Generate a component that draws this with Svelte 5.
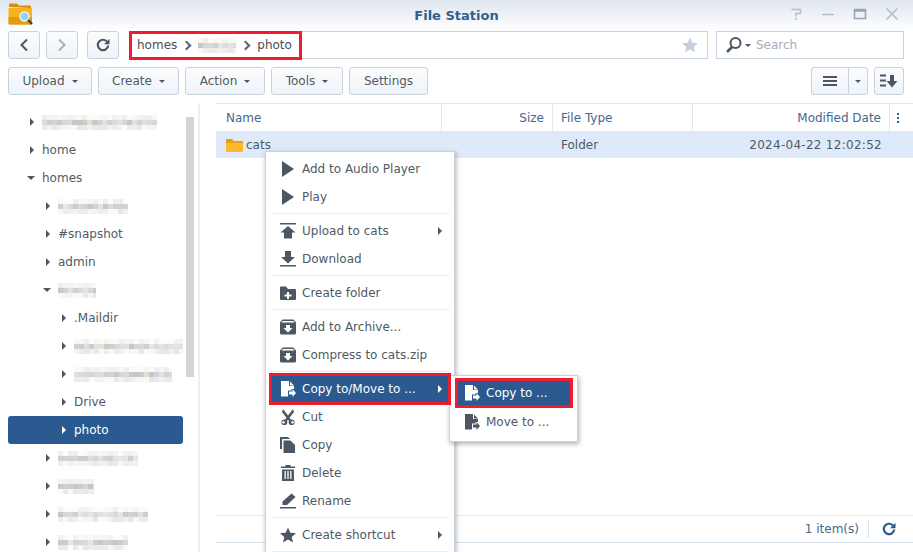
<script>
	const tree = [
		{ level: 0, blur: 115 },
		{ level: 0, label: 'home' },
		{ level: 0, label: 'homes', open: true },
		{ level: 1, blur: 70 },
		{ level: 1, label: '#snapshot' },
		{ level: 1, label: 'admin' },
		{ level: 1, blur: 38, open: true },
		{ level: 2, label: '.Maildir' },
		{ level: 2, blur: 113 },
		{ level: 2, blur: 98 },
		{ level: 2, label: 'Drive' },
		{ level: 2, label: 'photo', selected: true },
		{ level: 1, blur: 80 },
		{ level: 1, blur: 36 },
		{ level: 1, blur: 90 },
		{ level: 1, blur: 70 }
	];

	const actions = [
		{ label: 'Upload', width: 84, caret: true },
		{ label: 'Create', width: 81, caret: true },
		{ label: 'Action', width: 80, caret: true },
		{ label: 'Tools', width: 72, caret: true },
		{ label: 'Settings', width: 79 }
	];

	const menu = [
		[
			{ label: 'Add to Audio Player', icon: 'play' },
			{ label: 'Play', icon: 'play' }
		],
		[
			{ label: 'Upload to cats', icon: 'upload', sub: true },
			{ label: 'Download', icon: 'download' }
		],
		[{ label: 'Create folder', icon: 'newfolder' }],
		[
			{ label: 'Add to Archive...', icon: 'archive' },
			{ label: 'Compress to cats.zip', icon: 'archive' }
		],
		[
			{ label: 'Copy to/Move to ...', icon: 'copyto', sub: true, active: true },
			{ label: 'Cut', icon: 'cut' },
			{ label: 'Copy', icon: 'copy' },
			{ label: 'Delete', icon: 'trash' },
			{ label: 'Rename', icon: 'rename' }
		],
		[{ label: 'Create shortcut', icon: 'star', sub: true }],
		[]
	];

	// pixelated censor block, seeded so it stays the same between runs
	function mosaic(width, seed = 1) {
		const cell = 5;
		let r = seed * 97 + width;
		const rows = [
			[238, 16],
			[198, 34],
			[230, 22]
		].map(([base, span]) => {
			const stops = [];
			for (let x = 0; x < width; x += cell) {
				r = (r * 71 + 13) % 101;
				const g = base + (r % span);
				const tint = r % 3 === 0 ? 4 : r % 3 === 1 ? -3 : 0;
				stops.push(`rgb(${g + tint},${g},${g - tint}) ${x}px ${x + cell}px`);
			}
			return `linear-gradient(90deg,${stops.join(',')})`;
		});
		return `width:${width}px;background-image:${rows.join(',')}`;
	}
</script>

{#snippet icon(name)}
	<svg class="ico" viewBox="0 0 16 16" width="16" height="16" aria-hidden="true">
		{#if name === 'play'}
			<path d="M2 0L14 8 2 16Z" />
		{:else if name === 'upload'}
			<path d="M0 0h16v1.500H0z M8 3 L15.500 9.500 H12 V15.500 H4 V9.500 H0.500 Z" />
		{:else if name === 'download'}
			<path d="M5 0h6v6h4L8 12.500 1 6h4z M0 14h16v1.500H0z" />
		{:else if name === 'newfolder'}
			<path fill-rule="evenodd" d="M0 2.500A1 1 0 0 1 1 1.500h5l2 2.500h7a1 1 0 0 1 1 1v9a1 1 0 0 1-1 1H1a1 1 0 0 1-1-1z M7 7v2.500H4.500v2H7V14h2v-2.500h2.500v-2H9V7z" />
		{:else if name === 'archive'}
			<path fill-rule="evenodd" d="M2.500 0.500h11L16 3.500V14a1.500 1.500 0 0 1-1.500 1.500h-13A1.500 1.500 0 0 1 0 14V3.500z M2.500 2L1.500 3.500h13L13.500 2z M6 6v3H3.500L8 13.500 12.500 9H10V6z" />
		{:else if name === 'copyto'}
			<path d="M1 0H9V5H14V8H11.500V9.500H8V15.500H1z M10 0.500L14 4.500H10z" />
			<path d="M9 10.500h3.500V8l3.500 4-3.500 4v-2.500H9z" />
		{:else if name === 'cut'}
			<path fill-rule="evenodd" d="M3 0 L8 6.500 L13 0 L14 3 L9.500 8.800 L11 10.500 A3 3 0 1 1 9 12 L8 10.700 L7 12 A3 3 0 1 1 5 10.500 L6.500 8.800 L2 3 Z M3.500 12 a1.300 1.300 0 1 0 .01 0z M12.500 12 a1.300 1.300 0 1 0 .01 0z" />
		{:else if name === 'copy'}
			<path d="M0 0h8l2 2H3a1 1 0 0 0-1 1v9H0z M3.500 3.500h7l4.500 4.500v8H3.500z" />
		{:else if name === 'trash'}
			<path fill-rule="evenodd" d="M5.500 0h5v1.500H15V3H1V1.500h4.500z M2 4.500h12V16H2z M4.500 6v8h1.300V6z M7.350 6v8h1.300V6z M10.200 6v8h1.300V6z" />
		{:else if name === 'rename'}
			<path d="M11.500 0.500 L15.500 4 L7 12 H2.500 V8.500z M0 14h16v1.500H0z" />
		{:else if name === 'star'}
			<path d="M8 0.500 L10.300 5.700 L16 6.300 L11.700 10 L13 15.500 L8 12.600 L3 15.500 L4.300 10 L0 6.300 L5.700 5.700 Z" />
		{/if}
	</svg>
{/snippet}

<div class="app">
	<header class="title">
		<svg class="logo" viewBox="0 0 25 22" width="25" height="22" aria-hidden="true">
			<path d="M1 4V1.500Q1 .5 2 .5h7l2 2h11q1 0 1 1V5z" fill="#d98d0d" />
			<path d="M.5 5h23.500v15q0 1.500-1.500 1.500H2Q.5 21.500.5 20z" fill="#f5b324" />
			<path d="M.5 14h23.500v6q0 1.500-1.500 1.500H2Q.5 21.500.5 20z" fill="#e39a12" />
			<circle cx="16.500" cy="13.500" r="4.500" fill="#8fd6f2" stroke="#e8f4fa" stroke-width="1.500" />
			<path d="M20 17l4 4" stroke="#26415c" stroke-width="2.200" />
		</svg>
		<span class="title-text">File Station</span>
		<div class="win">
			<svg viewBox="0 0 14 14" width="14" height="14"><path d="M2.500 2.500h9v4h-4.500v3 M7 11v2" fill="none" stroke="#b4bcc4" stroke-width="1.500" /></svg>
			<svg viewBox="0 0 14 14" width="14" height="14"><path d="M1 7.500h12" stroke="#b4bcc4" stroke-width="1.500" /></svg>
			<svg viewBox="0 0 14 14" width="14" height="14"><path d="M1.500 2.500h11v9h-11z" fill="none" stroke="#9aa3ac" stroke-width="1.500" /><path d="M1.500 3.500h11" stroke="#9aa3ac" stroke-width="2.500" /></svg>
			<svg viewBox="0 0 14 14" width="14" height="14"><path d="M1.500 1.500l11 11M12.500 1.500l-11 11" stroke="#b4bcc4" stroke-width="1.500" /></svg>
		</div>
	</header>

	<div class="nav">
		<button class="btn square" aria-label="Back"><svg viewBox="0 0 12 14" width="12" height="14"><path d="M9 1.500L3.500 7 9 12.500" fill="none" stroke="#4d5763" stroke-width="2" /></svg></button>
		<button class="btn square" aria-label="Forward"><svg viewBox="0 0 12 14" width="12" height="14"><path d="M3 1.500L8.500 7 3 12.500" fill="none" stroke="#a9b2bb" stroke-width="2" /></svg></button>
		<button class="btn square refresh" aria-label="Refresh">
			<svg viewBox="0 0 14 14" width="14" height="14"><path d="M11.500 4.300A5.200 5.200 0 1 0 12.200 7.500" fill="none" stroke="#4d5763" stroke-width="2.200" /><path d="M13.500 .8v5.500H8z" fill="#4d5763" /></svg>
		</button>
		<div class="path">
			<div class="crumbs">
				<span>homes</span><i class="chev"></i><span class="blur" style={mosaic(38, 3)}></span><i class="chev"></i><span>photo</span>
			</div>
			<svg class="fav" viewBox="0 0 16 16" width="16" height="16"><path d="M8 .5L10.300 5.700 16 6.300 11.700 10 13 15.500 8 12.600 3 15.500 4.300 10 0 6.300 5.700 5.700z" fill="#c6d0da" /></svg>
		</div>
		<div class="search">
			<svg viewBox="0 0 18 18" width="18" height="18"><circle cx="10.500" cy="7" r="5" fill="none" stroke="#4d5763" stroke-width="2" /><path d="M7 11l-5 5" stroke="#4d5763" stroke-width="2.600" /></svg>
			<i class="caret"></i>
			<span>Search</span>
		</div>
	</div>

	<div class="actions">
		{#each actions as a}
			<button class="btn action" style="width:{a.width}px">{a.label}{#if a.caret}<i class="caret"></i>{/if}</button>
		{/each}
		<div class="view">
			<div class="split">
				<button class="btn list" aria-label="List view"><svg viewBox="0 0 16 12" width="16" height="12"><path d="M1 2h14M1 6h14M1 10h14" stroke="#4d5763" stroke-width="1.800" /></svg></button>
				<button class="btn drop" aria-label="View options"><i class="caret"></i></button>
			</div>
			<button class="btn sort" aria-label="Sort"><svg viewBox="0 0 18 14" width="18" height="14"><path d="M0 1.500h6M0 6.500h6M0 11.500h6" stroke="#4d5763" stroke-width="1.800" /><path d="M10 1h4v6h3.500L12 13.500 6.500 7H10z" fill="#4d5763" /></svg></button>
		</div>
	</div>

	<div class="body">
		<aside class="side">
			<div class="tree">
				{#each tree as n, i}
					<div class="node l{n.level}" class:selected={n.selected}>
						<i class={n.open ? 'arrow-down' : 'arrow-right'}></i>
						{#if n.blur}
							<span class="blur" style={mosaic(n.blur, i + 1)}></span>
						{:else}
							<span>{n.label}</span>
						{/if}
					</div>
				{/each}
			</div>
			<div class="scroll"></div>
		</aside>

		<main class="files">
			<div class="thead">
				<div class="th name">Name</div>
				<div class="th size">Size</div>
				<div class="th type">File Type</div>
				<div class="th date">Modified Date</div>
				<div class="th more"><i></i><i></i><i></i></div>
			</div>
			<div class="row">
				<div class="name">
					<svg viewBox="0 0 17 14" width="17" height="14"><path d="M0 2q0-1 1-1h5l2 2h8q1 0 1 1v1H0z" fill="#e79f16" /><path d="M0 5h17v8q0 1-1 1H1q-1 0-1-1z" fill="#fdb827" /></svg>
					cats
				</div>
				<div class="size"></div>
				<div class="type">Folder</div>
				<div class="date stamp">2024-04-22 12:02:52</div>
			</div>
			<div class="spacer"></div>
			<footer class="foot">
				<span>1 item(s)</span>
				<button class="reload" aria-label="Reload">
					<svg viewBox="0 0 14 14" width="14" height="14"><path d="M11.500 4.300A5.200 5.200 0 1 0 12.200 7.500" fill="none" stroke="#2b5a8e" stroke-width="2.200" /><path d="M13.500 .8v5.500H8z" fill="#2b5a8e" /></svg>
				</button>
			</footer>
		</main>
	</div>

	<div class="menu">
		{#each menu as group, g}
			{#if g > 0}<div class="sep"></div>{/if}
			{#each group as item}
				<div class="item" class:active={item.active}>
					{@render icon(item.icon)}
					<span>{item.label}</span>
					{#if item.sub}<i class="arrow-right sub"></i>{/if}
				</div>
			{/each}
		{/each}
	</div>

	<div class="submenu">
		<div class="item active">{@render icon('copyto')}<span>Copy to ...</span></div>
		<div class="item">{@render icon('copyto')}<span>Move to ...</span></div>
	</div>

	<div class="mark-path"></div>
</div>

<style>
	:global(body) {
		margin: 0;
		background: #fff;
	}

	.app {
		position: relative;
		display: flex;
		flex-direction: column;
		width: 913px;
		height: 552px;
		overflow: hidden;
		background: #fff;
		font: 12px/16px 'DejaVu Sans', Verdana, sans-serif;
		color: #505a64;
	}

	i {
		display: block;
		font-style: normal;
	}

	.title {
		display: flex;
		align-items: center;
		justify-content: center;
		position: relative;
		flex: none;
		height: 31px;
		background: linear-gradient(#dfe6ee, #fff);
	}

	.logo {
		position: absolute;
		left: 8px;
		top: 3px;
	}

	.title-text {
		font-weight: 700;
		font-size: 13px;
		color: #2f5f92;
	}

	.win {
		position: absolute;
		right: 14px;
		top: 7px;
		display: flex;
		gap: 18px;
	}

	.btn {
		display: flex;
		align-items: center;
		justify-content: center;
		height: 28px;
		padding: 0;
		border: 1px solid #c6d3df;
		border-radius: 3px;
		background: linear-gradient(#fbfcfd, #eff4f9);
		font: inherit;
		color: inherit;
	}

	.nav {
		display: flex;
		flex: none;
		height: 28px;
		padding: 0 9px 0 8px;
		gap: 6px;
	}

	.square {
		width: 32px;
	}

	.refresh {
		margin-left: 3px;
	}

	.path {
		display: flex;
		align-items: center;
		justify-content: space-between;
		width: 579px;
		margin-left: 4px;
		box-sizing: border-box;
		border: 1px solid #c6d3df;
		padding: 0 9px 0 7px;
	}

	.crumbs {
		display: flex;
		align-items: center;
		gap: 8px;
		color: #4a4f55;
	}

	.chev {
		width: 5px;
		height: 5px;
		margin-left: -2px;
		border: solid #5c6670;
		border-width: 2px 2px 0 0;
		transform: rotate(45deg);
	}

	.search {
		display: flex;
		align-items: center;
		flex: 1;
		margin-left: 2px;
		padding-left: 8px;
		border: 1px solid #c6d3df;
		color: #a6aeb6;
	}

	.search .caret {
		margin: 0 5px 0 2px;
	}

	.caret {
		width: 0;
		height: 0;
		border: 3.500px solid transparent;
		border-top: 3.500px solid #4d5763;
		border-bottom: 0;
	}

	.actions {
		display: flex;
		flex: none;
		height: 28px;
		margin-top: 8px;
		padding: 0 9px 0 8px;
		gap: 6px;
	}

	.action {
		gap: 7px;
	}

	.view {
		display: flex;
		gap: 6px;
		margin-left: auto;
	}

	.split {
		display: flex;
	}

	.list {
		width: 37px;
		border-radius: 3px 0 0 3px;
		border-right: 0;
	}

	.drop {
		width: 20px;
		border-radius: 0 3px 3px 0;
	}

	.sort {
		width: 30px;
	}

	.body {
		display: flex;
		flex: 1;
		min-height: 0;
		margin-top: 8px;
	}

	.side {
		position: relative;
		width: 200px;
		flex: none;
		box-sizing: border-box;
		padding: 5px 0 0 8px;
		border-right: 2px solid #eef0f2;
	}

	.node {
		display: flex;
		align-items: center;
		width: 175px;
		height: 28px;
		box-sizing: border-box;
		border-radius: 3px;
		gap: 8px;
		white-space: nowrap;
	}

	.l0 {
		padding-left: 22px;
	}

	.l1 {
		padding-left: 38px;
	}

	.l2 {
		padding-left: 54px;
	}

	.arrow-right {
		width: 0;
		height: 0;
		border-left: 4px solid #4d5763;
		border-top: 4.500px solid transparent;
		border-bottom: 4.500px solid transparent;
	}

	.arrow-down {
		width: 0;
		height: 0;
		margin-left: -3px;
		margin-right: -1px;
		border-top: 4px solid #4d5763;
		border-left: 4.500px solid transparent;
		border-right: 4.500px solid transparent;
	}

	.selected {
		background: #2a5a8f;
		color: #fff;
	}

	.selected .arrow-right {
		border-left-color: #fff;
	}

	.blur {
		display: block;
		height: 15px;
		background-size: 100% 5px;
		background-repeat: no-repeat;
		background-position:
			0 0,
			0 5px,
			0 10px;
	}

	.scroll {
		position: absolute;
		left: 186px;
		top: 14px;
		width: 8px;
		height: 260px;
		background: #d3d5d7;
	}

	.files {
		flex: 1;
		display: flex;
		flex-direction: column;
		min-width: 0;
		margin-left: 16px;
		border-top: 1px solid #e0e6ec;
		color: #505a64;
	}

	.thead,
	.row {
		display: grid;
		grid-template-columns: 226px 111px 140px 197px 23px;
		flex: none;
	}

	.thead {
		height: 27px;
		color: #44688f;
	}

	.th {
		display: flex;
		align-items: center;
		padding: 0 8px;
		border-right: 1px solid #dfe7ef;
	}

	.th.name {
		padding-left: 10px;
	}

	.size,
	.date {
		display: flex;
		align-items: center;
		justify-content: flex-end;
		padding: 0 8px;
	}

	.stamp {
		letter-spacing: 0.28px;
	}

	.more {
		flex-direction: column;
		justify-content: center;
		gap: 2px;
		padding: 0 0 0 7px;
		border: 0;
		align-items: flex-start;
	}

	.more i {
		width: 2px;
		height: 2px;
		background: #2a5a8f;
	}

	.row {
		height: 27px;
		background: #deeafa;
		align-items: center;
	}

	.row .name {
		display: flex;
		align-items: center;
		gap: 3px;
		padding-left: 10px;
	}

	.row .type {
		padding-left: 8px;
	}

	.spacer {
		flex: 1;
	}

	.foot {
		display: flex;
		align-items: center;
		justify-content: flex-end;
		flex: none;
		height: 26px;
		margin-bottom: 9px;
		border-top: 1px solid #e8edf2;
		border-bottom: 1px solid #d5e1ec;
		color: #44688f;
	}

	.reload {
		display: flex;
		align-items: center;
		width: 45px;
		height: 18px;
		margin-left: 9px;
		padding: 0 0 0 13px;
		border: 0;
		border-left: 1px solid #d5e1ec;
		background: none;
	}

	.menu,
	.submenu {
		position: absolute;
		box-sizing: border-box;
		background: #fff;
		border: 1px solid #c6d3df;
		box-shadow: 1px 2px 5px rgba(0, 0, 0, 0.3);
	}

	.menu {
		left: 265px;
		top: 151px;
		width: 190px;
		padding: 3px 5px;
	}

	.submenu {
		left: 449px;
		top: 375px;
		width: 129px;
		padding: 2px 4px 5px 5px;
	}

	.item {
		display: flex;
		align-items: center;
		position: relative;
		height: 28px;
		padding-left: 9px;
		gap: 6px;
		fill: #4d5763;
		white-space: nowrap;
	}

	.ico {
		flex: none;
		fill: inherit;
	}

	.sub {
		position: absolute;
		right: 7px;
		top: 10px;
	}

	.sep {
		height: 1px;
		margin: 2px 0 3px;
		background: #e8edf2;
	}

	.active {
		background: #2a5a8f;
		color: #fff;
		fill: #fff;
		outline: 3px solid #ee1c2e;
		outline-offset: -1px;
		z-index: 1;
	}

	.active .sub {
		border-left-color: #fff;
	}

	.submenu .active {
		height: 30px;
		outline-offset: -3px;
	}

	.mark-path {
		position: absolute;
		left: 129px;
		top: 31px;
		width: 173px;
		height: 29px;
		box-sizing: border-box;
		border: 3px solid #ee1c2e;
	}
</style>
